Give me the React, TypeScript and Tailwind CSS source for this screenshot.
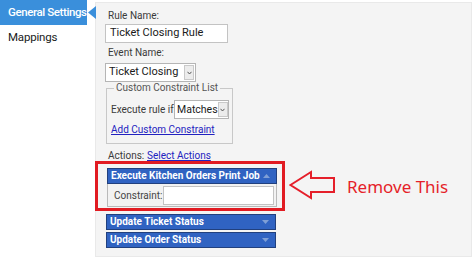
import React from "react";

function Caret({ up = false, color = "#7f9fd6" }: { up?: boolean; color?: string }) {
  return (
    <svg width="7" height="4" viewBox="0 0 7 4" className="shrink-0">
      {up ? <path d="M0 4 L3.5 0 L7 4 Z" fill={color} /> : <path d="M0 0 L3.5 4 L7 0 Z" fill={color} />}
    </svg>
  );
}

function SelectBox({ text, w, small = false }: { text: string; w: string; small?: boolean }) {
  return (
    <div className={`${w} h-[19px] bg-white border border-[#b5b5b5] flex items-stretch`}>
      <div
        className={
          small
            ? "flex-1 pl-[2px] flex items-center text-[10.5px] text-[#1a1a1a] whitespace-nowrap"
            : "flex-1 pl-[3px] flex items-center text-[11px] text-[#1a1a1a] whitespace-nowrap"
        }
      >
        {text}
      </div>
      <div className="w-[10px] shrink-0 my-[1px] mr-[1px] border border-[#c9c9c9] bg-[#ececec] flex items-center justify-center">
        <svg width="5" height="4" viewBox="0 0 5 4">
          <path d="M0.5 0.8 L2.5 3 L4.5 0.8" stroke="#555" strokeWidth="1" fill="none" />
        </svg>
      </div>
    </div>
  );
}

function Bar({ title, up = false }: { title: string; up?: boolean }) {
  return (
    <div className="w-[170px] h-[16px] bg-[#3063c2] border border-[#21407e] flex items-center justify-between pl-[3px] pr-[6px]">
      <span className="text-white font-bold text-[10px] leading-none">{title}</span>
      <Caret up={up} />
    </div>
  );
}

export default function App() {
  return (
    <div className="w-[474px] h-[260px] bg-white flex font-['Roboto',sans-serif] text-[10px] text-[#3a3a3a] overflow-hidden">
      <aside className="w-[95px] shrink-0 relative">
        <div className="w-[87px] h-[25px] bg-[#3a8fdb] text-white text-[11.5px] font-medium pl-[8px] flex items-center tracking-[-0.4px] whitespace-nowrap">
          General Settings
        </div>
        <svg width="8" height="13" viewBox="0 0 8 13" className="absolute left-[88px] top-[6px]">
          <path d="M8 0 L0 6.5 L8 13 Z" fill="#3a8fdb" />
        </svg>
        <div className="pl-[8px] mt-[4px] text-[11.5px] text-[#1a1a1a] tracking-[-0.2px] whitespace-nowrap">Mappings</div>
      </aside>

      <main className="mt-[2px] h-[255px] w-[377px] bg-[#f4f4f4] border border-[#e9e9e9] pl-[9px] flex flex-col">
        <div className="pl-[3px] mt-[6px] h-[13px] leading-[13px]">Rule Name:</div>
        <div className="mt-[2px] w-[123px] h-[19px] bg-white border border-[#c3c3c3] pl-[4px] flex items-center text-[11px] text-[#1a1a1a]">
          Ticket Closing Rule
        </div>
        <div className="pl-[3px] mt-[3px] h-[13px] leading-[13px]">Event Name:</div>
        <div className="mt-[4px]">
          <SelectBox text="Ticket Closing" w="w-[91px]" />
        </div>

        <fieldset className="mt-0 ml-[1px] w-[127px] border border-[#c8c8c8] pl-[4px] pr-[2px] pb-[7px]">
          <legend className="px-[2px] ml-[3px] text-[10px] leading-[12px] text-[#555]">Custom Constraint List</legend>
          <div className="flex items-center mt-[6px]">
            <span className="w-[63px] whitespace-nowrap">Execute rule if</span>
            <SelectBox text="Matches" w="w-[55px]" small />
          </div>
          <div className="mt-[5px] text-[#2222c0] underline leading-[12px]">Add Custom Constraint</div>
        </fieldset>

        <div className="pl-[3px] mt-[6px] leading-[12px] flex">
          <span className="w-[39px]">Actions:</span>
          <span className="text-[#2222c0] underline">Select Actions</span>
        </div>

        <div className="flex items-center -ml-[10px] -mt-[1px]">
          <div className="w-[190px] h-[50px] border-[3px] border-[#e11b22] pl-[9px] pt-[4px]">
            <Bar title="Execute Kitchen Orders Print Job" up />
            <div className="w-[170px] h-[23px] bg-[#f2f2f2] border border-t-0 border-[#b9b9b9] flex items-center pl-[6px] pr-[2px]">
              <span className="w-[49px] text-[#444]">Constraint:</span>
              <div className="flex-1 h-[19px] bg-white border border-[#c3c3c3]" />
            </div>
          </div>
          <svg width="47" height="32" viewBox="0 0 47 32" className="ml-[4px]">
            <path d="M1.5 15 L22 2 L22 8 L45 8 L45 22 L22 22 L22 28 Z" fill="none" stroke="#e51f2a" strokeWidth="2" strokeLinejoin="miter" />
          </svg>
          <span className="ml-[11px] text-[17px] text-[#e51f2a] font-['Noto_Sans',sans-serif] leading-none">Remove This</span>
        </div>

        <div className="mt-[3px] ml-[1px] flex flex-col gap-[2px]">
          <Bar title="Update Ticket Status" />
          <Bar title="Update Order Status" />
        </div>
      </main>
    </div>
  );
}
